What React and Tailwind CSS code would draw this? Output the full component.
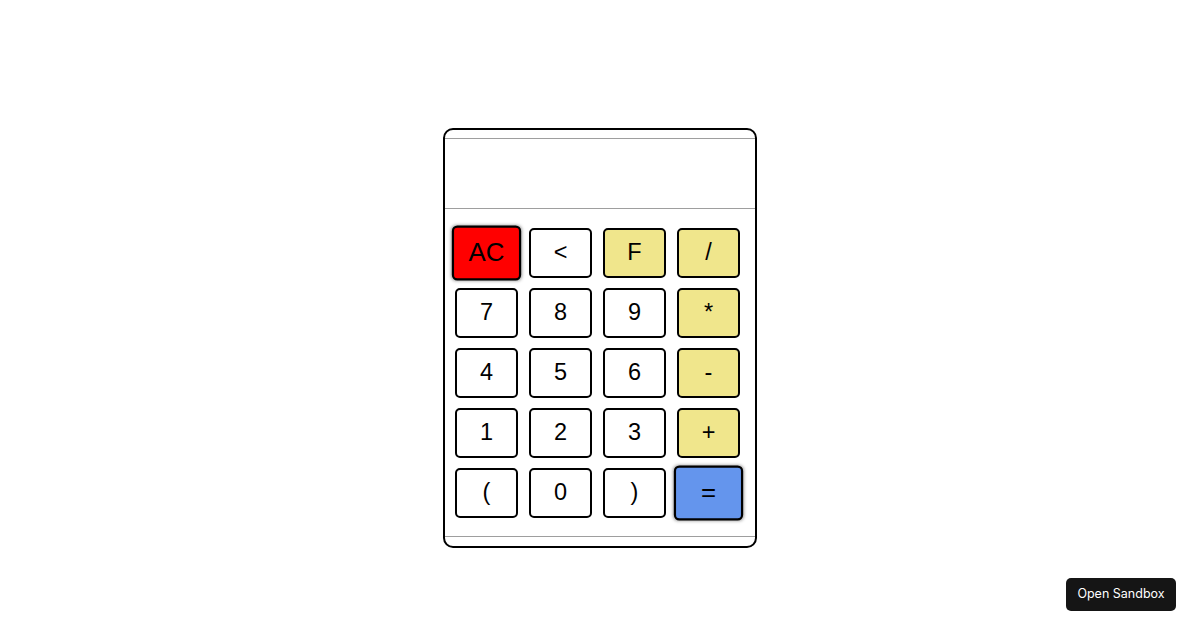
import React from "react";

const rows = [
  [
    { t: "AC", c: "bg-[#ff0000] scale-110 shadow-[0_0_3px_rgba(0,0,0,0.4)]" },
    { t: "<", c: "bg-white" },
    { t: "F", c: "bg-[#f0e68c]" },
    { t: "/", c: "bg-[#f0e68c]" },
  ],
  [
    { t: "7", c: "bg-white" },
    { t: "8", c: "bg-white" },
    { t: "9", c: "bg-white" },
    { t: "*", c: "bg-[#f0e68c]" },
  ],
  [
    { t: "4", c: "bg-white" },
    { t: "5", c: "bg-white" },
    { t: "6", c: "bg-white" },
    { t: "-", c: "bg-[#f0e68c]" },
  ],
  [
    { t: "1", c: "bg-white" },
    { t: "2", c: "bg-white" },
    { t: "3", c: "bg-white" },
    { t: "+", c: "bg-[#f0e68c]" },
  ],
  [
    { t: "(", c: "bg-white" },
    { t: "0", c: "bg-white" },
    { t: ")", c: "bg-white" },
    { t: "=", c: "bg-[#6495ed] scale-110 shadow-[0_0_3px_rgba(0,0,0,0.4)]" },
  ],
];

export default function App() {
  return (
    <div
      className="relative w-full h-[630px] bg-white flex justify-center pt-[128px]"
      style={{ fontFamily: '"Liberation Sans", Arial, sans-serif' }}
    >
      <div className="w-[314px] h-[420px] border-2 border-black rounded-[10px] flex flex-col">
        <div className="h-[8px]" />
        <div className="h-[71px] border-y border-[#9e9e9e]" />
        <div className="pt-[19px] pl-[10px] grid grid-cols-[repeat(4,63px)] grid-rows-[repeat(5,50px)] gap-x-[11px] gap-y-[10px]">
          {rows.flat().map((b, i) => (
            <button
              key={i}
              className={`w-[63px] h-[50px] border-2 border-black rounded-[5px] flex items-center justify-center text-[23.5px] text-black leading-none ${b.c}`}
            >
              {b.t}
            </button>
          ))}
        </div>
        <div className="h-[18px]" />
        <div className="border-t border-[#9e9e9e]" />
      </div>
      <div
        className="absolute right-[24px] bottom-[19px] w-[110px] h-[33px] bg-[#151515] rounded-[5px] flex items-center justify-center text-white text-[12.5px]"
        style={{ fontFamily: "Inter, 'Liberation Sans', sans-serif" }}
      >
        Open Sandbox
      </div>
    </div>
  );
}
